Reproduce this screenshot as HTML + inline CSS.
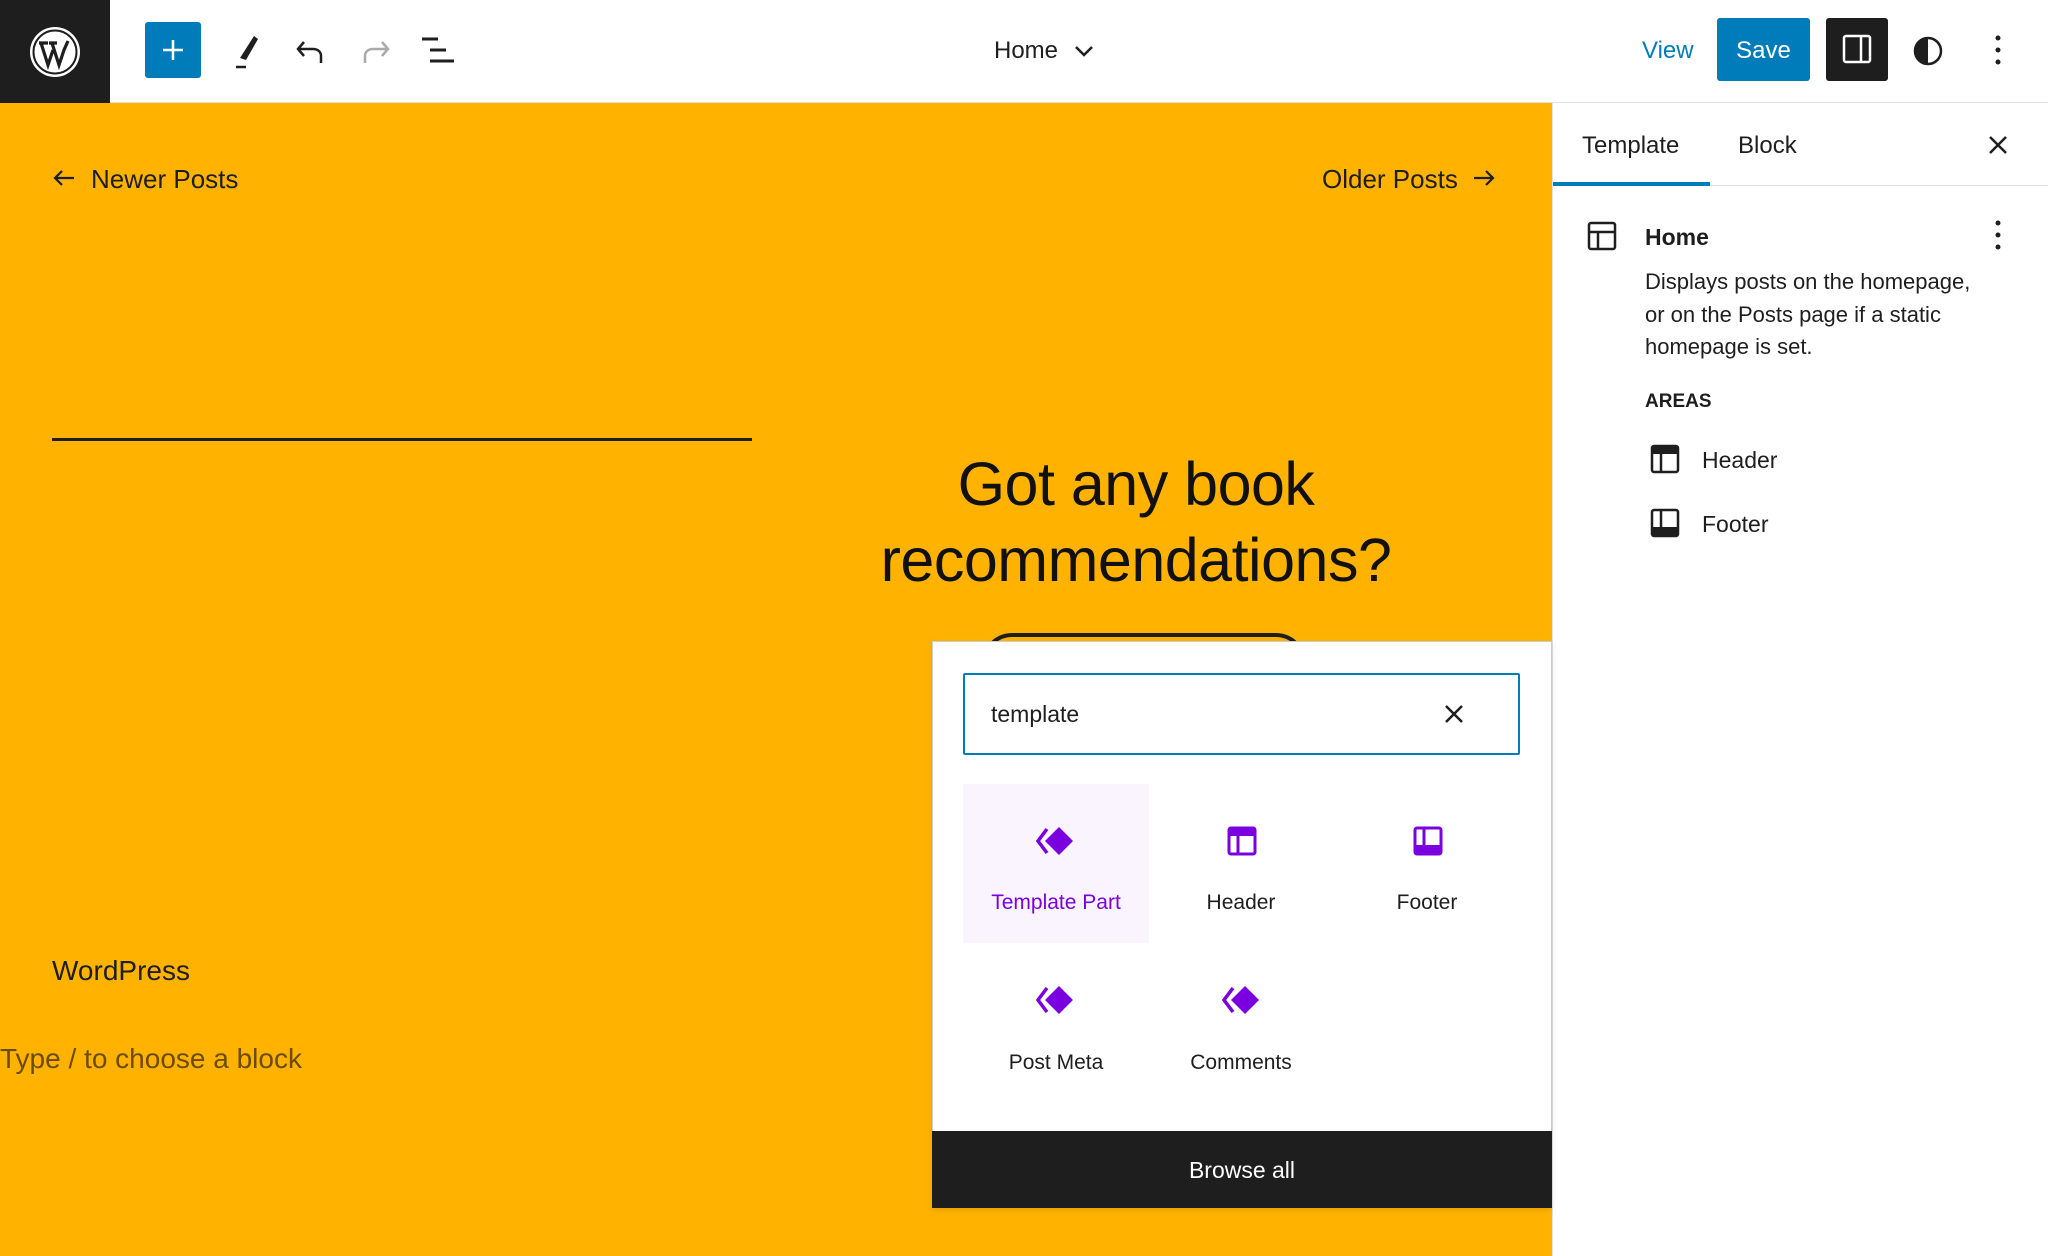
<!DOCTYPE html>
<html><head><meta charset="utf-8"><style>
*{box-sizing:border-box;margin:0;padding:0}
body{width:2048px;height:1256px;overflow:hidden;background:#ffb300;font-family:"Liberation Sans",sans-serif;color:#1e1e1e;position:relative}
.a{position:absolute}
.t{position:absolute;white-space:nowrap;line-height:1}
</style></head><body>
<!-- top bar -->
<div class="a" style="left:0;top:0;width:2048px;height:103px;background:#fff;border-bottom:1px solid #e0e0e0"></div>
<div class="a" style="left:0;top:0;width:110px;height:103px;background:#1e1e1e"></div>
<svg class="a" style="left:28px;top:25px" width="54" height="54" viewBox="0 0 54 54"><circle cx="27" cy="27" r="25" fill="#fff"/><circle cx="27" cy="27" r="21.5" fill="none" stroke="#1e1e1e" stroke-width="2"/><path d="M11 18h9M13 18l7 22 5-15M21 18h8M24 18l7 22 5-15 4-9" stroke="#1e1e1e" stroke-width="3.2" fill="none"/></svg>
<div class="a" style="left:145px;top:22px;width:56px;height:56px;background:#007cba;border-radius:3px"></div>
<svg class="a" style="left:157px;top:34px" width="32" height="32"><path d="M16 6v20M6 16h20" stroke="#fff" stroke-width="2.5"/></svg>
<svg class="a" style="left:230px;top:32px" width="34" height="38"><path d="M10 26l14-22 4 3-12 21z" fill="#1e1e1e"/><path d="M6 35h10" stroke="#1e1e1e" stroke-width="2.5"/></svg>
<svg class="a" style="left:294px;top:34px" width="34" height="34"><path d="M10 8l-6 7 6 7M4 15h15c5 0 8 3 8 7v7" stroke="#1e1e1e" stroke-width="2.5" fill="none"/></svg>
<svg class="a" style="left:358px;top:34px" width="34" height="34"><path d="M24 8l6 7-6 7M30 15H15c-5 0-8 3-8 7v7" stroke="#aaa" stroke-width="2.5" fill="none"/></svg>
<svg class="a" style="left:420px;top:36px" width="36" height="30"><path d="M2 3h16M10 14h16M10 25h24" stroke="#1e1e1e" stroke-width="3"/></svg>
<div class="t" style="left:994px;top:39px;font-size:24px">Home</div>
<svg class="a" style="left:1073px;top:44px" width="22" height="14"><path d="M3 3l8 8 8-8" stroke="#1e1e1e" stroke-width="2.5" fill="none"/></svg>
<div class="t" style="left:1642px;top:39px;font-size:24px;color:#007cba">View</div>
<div class="a" style="left:1717px;top:18px;width:93px;height:63px;background:#007cba;border-radius:3px"></div>
<div class="t" style="left:1717px;top:39px;width:93px;text-align:center;font-size:24px;color:#fff">Save</div>
<div class="a" style="left:1826px;top:18px;width:62px;height:63px;background:#1e1e1e;border-radius:3px"></div>
<svg class="a" style="left:1841px;top:33px" width="32" height="32"><rect x="3" y="3" width="26" height="26" rx="2" fill="none" stroke="#fff" stroke-width="2.5"/><path d="M20 3v26" stroke="#fff" stroke-width="2.5"/></svg>
<svg class="a" style="left:1912px;top:35px" width="32" height="32"><circle cx="16" cy="16" r="13" fill="none" stroke="#1e1e1e" stroke-width="2.5"/><path d="M16 3a13 13 0 0 0 0 26z" fill="#1e1e1e"/></svg>
<svg class="a" style="left:1990px;top:33px" width="16" height="34"><circle cx="8" cy="5" r="2.5" fill="#1e1e1e"/><circle cx="8" cy="17" r="2.5" fill="#1e1e1e"/><circle cx="8" cy="29" r="2.5" fill="#1e1e1e"/></svg>

<!-- sidebar -->
<div class="a" style="left:1552px;top:103px;width:496px;height:1153px;background:#fff;border-left:1px solid #e0e0e0"></div>
<div class="a" style="left:1553px;top:185px;width:495px;height:1px;background:#ddd"></div>
<div class="a" style="left:1553px;top:182px;width:157px;height:4px;background:#007cba"></div>
<div class="t" style="left:1582px;top:134px;font-size:24px">Template</div>
<div class="t" style="left:1738px;top:134px;font-size:24px">Block</div>
<svg class="a" style="left:1986px;top:133px" width="24" height="24"><path d="M4 4l16 16M20 4L4 20" stroke="#1e1e1e" stroke-width="2.5"/></svg>
<svg class="a" style="left:1586px;top:220px" width="32" height="32"><rect x="3" y="3" width="26" height="26" rx="2" fill="none" stroke="#1e1e1e" stroke-width="2.5"/><path d="M3 12h26M12 12v17" stroke="#1e1e1e" stroke-width="2.5"/></svg>
<div class="t" style="left:1645px;top:226px;font-size:23px;font-weight:bold">Home</div>
<svg class="a" style="left:1990px;top:218px" width="16" height="34"><circle cx="8" cy="5" r="2.5" fill="#1e1e1e"/><circle cx="8" cy="17" r="2.5" fill="#1e1e1e"/><circle cx="8" cy="29" r="2.5" fill="#1e1e1e"/></svg>
<div class="a" style="left:1645px;top:266px;width:335px;font-size:22px;line-height:32.5px">Displays posts on the homepage,<br>or on the Posts page if a static<br>homepage is set.</div>
<div class="t" style="left:1645px;top:392px;font-size:19px;font-weight:bold;color:#1e1e1e">AREAS</div>
<svg class="a" style="left:1650px;top:444px" width="30" height="30"><rect x="2" y="2" width="26" height="26" rx="2" fill="none" stroke="#1e1e1e" stroke-width="2.5"/><rect x="2" y="2" width="26" height="8" fill="#1e1e1e"/><path d="M11 10v18" stroke="#1e1e1e" stroke-width="2.5"/></svg>
<div class="t" style="left:1702px;top:449px;font-size:23px">Header</div>
<svg class="a" style="left:1650px;top:508px" width="30" height="30"><rect x="2" y="2" width="26" height="26" rx="2" fill="none" stroke="#1e1e1e" stroke-width="2.5"/><rect x="2" y="19" width="26" height="9" fill="#1e1e1e"/><path d="M11 2v17" stroke="#1e1e1e" stroke-width="2.5"/></svg>
<div class="t" style="left:1702px;top:513px;font-size:23px">Footer</div>

<!-- canvas -->
<svg class="a" style="left:52px;top:168px" width="24" height="20"><path d="M10 3L3 10l7 7M3 10h19" stroke="#1e1e1e" stroke-width="2.2" fill="none"/></svg>
<div class="t" style="left:91px;top:166px;font-size:26px">Newer Posts</div>
<div class="t" style="left:1322px;top:166px;font-size:26px">Older Posts</div>
<svg class="a" style="left:1472px;top:168px" width="24" height="20"><path d="M14 3l7 7-7 7M21 10H2" stroke="#1e1e1e" stroke-width="2.2" fill="none"/></svg>
<div class="a" style="left:52px;top:438px;width:700px;height:3px;background:#1e1e1e"></div>
<div class="a" style="left:736px;top:446px;width:800px;text-align:center;font-size:61px;line-height:76px;color:#111;letter-spacing:-0.5px">Got any book recommendations?</div>
<div class="a" style="left:982px;top:633px;width:324px;height:60px;border:4px solid #1e1e1e;border-radius:30px"></div>
<div class="t" style="left:52px;top:957px;font-size:28px">WordPress</div>
<div class="t" style="left:0;top:1045px;font-size:28px;color:#6b4c00">Type / to choose a block</div>

<!-- popover -->
<div class="a" style="left:932px;top:641px;width:620px;height:567px;background:#fff;border:1px solid #ccc;box-shadow:0 2px 6px rgba(0,0,0,.1)"></div>
<div class="a" style="left:963px;top:673px;width:557px;height:82px;border:2px solid #007cba;border-radius:2px"></div>
<div class="t" style="left:991px;top:703px;font-size:23px">template</div>
<svg class="a" style="left:1443px;top:703px" width="22" height="22"><path d="M3 3l16 16M19 3L3 19" stroke="#1e1e1e" stroke-width="2.5"/></svg>
<div class="a" style="left:963px;top:784px;width:186px;height:159px;background:#faf4ff"></div>
<svg class="a" style="left:1036px;top:826px" width="38" height="30"><path d="M11 3l-9 12 9 12" stroke="#7a00df" stroke-width="3.5" fill="none"/><path d="M23 1l14 14-14 14-14-14z" fill="#7a00df"/></svg>
<div class="t" style="left:963px;top:892px;width:186px;text-align:center;font-size:21px;color:#7a00df">Template Part</div>
<svg class="a" style="left:1227px;top:826px" width="30" height="30"><rect x="2" y="2" width="26" height="26" rx="2" fill="none" stroke="#7a00df" stroke-width="3"/><rect x="2" y="2" width="26" height="8" fill="#7a00df"/><path d="M11 10v18" stroke="#7a00df" stroke-width="3"/></svg>
<div class="t" style="left:1148px;top:892px;width:186px;text-align:center;font-size:21px">Header</div>
<svg class="a" style="left:1413px;top:826px" width="30" height="30"><rect x="2" y="2" width="26" height="26" rx="2" fill="none" stroke="#7a00df" stroke-width="3"/><rect x="2" y="19" width="26" height="9" fill="#7a00df"/><path d="M11 2v17" stroke="#7a00df" stroke-width="3"/></svg>
<div class="t" style="left:1334px;top:892px;width:186px;text-align:center;font-size:21px">Footer</div>
<svg class="a" style="left:1036px;top:985px" width="38" height="30"><path d="M11 3l-9 12 9 12" stroke="#7a00df" stroke-width="3.5" fill="none"/><path d="M23 1l14 14-14 14-14-14z" fill="#7a00df"/></svg>
<div class="t" style="left:963px;top:1052px;width:186px;text-align:center;font-size:21px">Post Meta</div>
<svg class="a" style="left:1222px;top:985px" width="38" height="30"><path d="M11 3l-9 12 9 12" stroke="#7a00df" stroke-width="3.5" fill="none"/><path d="M23 1l14 14-14 14-14-14z" fill="#7a00df"/></svg>
<div class="t" style="left:1148px;top:1052px;width:186px;text-align:center;font-size:21px">Comments</div>
<div class="a" style="left:932px;top:1131px;width:620px;height:77px;background:#1e1e1e"></div>
<div class="t" style="left:932px;top:1159px;width:620px;text-align:center;font-size:23px;color:#fff">Browse all</div>
</body></html>
